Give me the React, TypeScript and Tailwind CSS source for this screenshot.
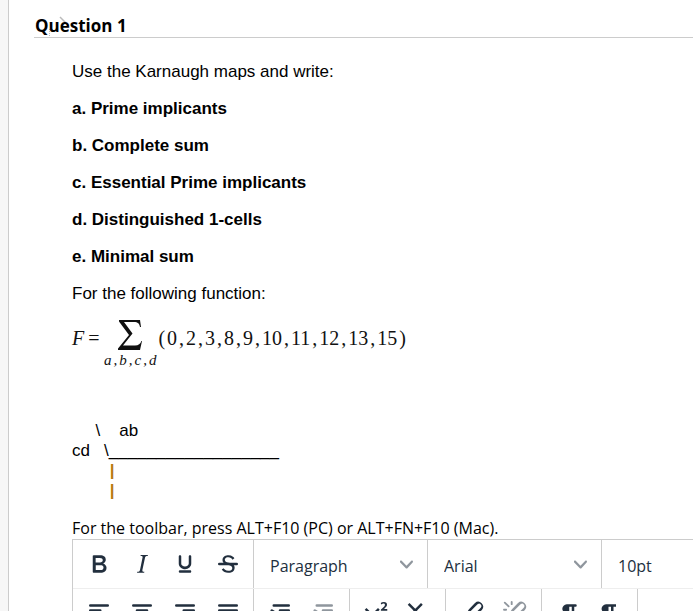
import React from "react";
import clsx from "clsx";

type IconProps = {
  paths: string[];
};

type ToolProps = IconProps & {
  label: string;
  disabled?: boolean;
};

type PickerProps = {
  label: string;
  options: string[];
};

const BAR = "M5 5h14a1 1 0 0 1 0 2H5a1 1 0 1 1 0-2z";
const LINK =
  "M6.2 12.3a1 1 0 0 1 1.4 1.4l-2 2a2 2 0 1 0 2.6 2.8l4.8-4.8a1 1 0 0 0 0-1.4 1 1 0 1 1 1.4-1.3 2.9 2.9 0 0 1 0 4L9.6 20a3.9 3.9 0 0 1-5.5-5.5l2-2zm11.6-.6a1 1 0 0 1-1.4-1.4l2-2a2 2 0 1 0-2.6-2.8L11 10.3a1 1 0 0 0 0 1.4A1 1 0 1 1 9.6 13a2.9 2.9 0 0 1 0-4L14.4 4a3.9 3.9 0 0 1 5.5 5.5l-2 2z";

const textTools: ToolProps[] = [
  {
    label: "Bold",
    paths: [
      "M7.8 19c-.3 0-.5 0-.6-.2l-.2-.5V5.7c0-.2 0-.4.2-.5l.6-.2h5c1.5 0 2.7.3 3.5 1 .7.6 1.1 1.4 1.1 2.5a3 3 0 0 1-.6 1.9c-.4.6-1 1-1.6 1.2.4.1.9.3 1.3.6s.8.7 1 1.2c.4.4.5 1 .5 1.6 0 1.3-.4 2.3-1.3 3-.8.7-2.1 1-3.8 1H7.8zm5-8.3c.6 0 1.2-.1 1.6-.5.4-.3.6-.7.6-1.3 0-1.1-.8-1.7-2.3-1.7H9.3v3.5h3.4zm.5 6c.7 0 1.3-.1 1.7-.4.4-.4.6-.9.6-1.5s-.2-1-.7-1.4c-.4-.3-1-.4-2-.4H9.4v3.8h4z",
    ],
  },
  {
    label: "Italic",
    paths: [
      "M16.7 4.7l-.1.9h-.3c-.6 0-1 0-1.4.3-.3.3-.4.6-.5 1.1l-2.1 9.8v.6c0 .5.4.8 1.4.8h.2l-.2.8H8l.2-.8h.2c1.1 0 1.8-.5 2-1.5l2-9.8.1-.5c0-.6-.4-.8-1.4-.8h-.3l.2-.9h5.8z",
    ],
  },
  {
    label: "Underline",
    paths: [
      "M16 5c.6 0 1 .4 1 1v5.5a4 4 0 0 1-.4 1.8l-1 1.4a5.3 5.3 0 0 1-5.5 1 5 5 0 0 1-1.6-1c-.5-.4-.8-.9-1.1-1.4a4 4 0 0 1-.4-1.8V6c0-.6.4-1 1-1s1 .4 1 1v5.5c0 .3 0 .6.2 1l.6.7a3.3 3.3 0 0 0 2.2.8 3.4 3.4 0 0 0 2.2-.8c.3-.2.4-.5.6-.8l.2-.9V6c0-.6.4-1 1-1zM8 17h8c.6 0 1 .4 1 1s-.4 1-1 1H8a1 1 0 0 1 0-2z",
    ],
  },
  {
    label: "Strikethrough",
    paths: [
      "M15.6 8.5c-.5-.7-1-1.1-1.3-1.3-.6-.4-1.3-.6-2-.6-2.7 0-2.8 1.7-2.8 2.1 0 1.6 1.8 2 3.2 2.3 4.4.9 4.6 2.8 4.6 3.9 0 1.4-.7 4.1-5 4.1A6.2 6.2 0 0 1 7 16.4l1.5-1.1c.4.6 1.6 2 3.7 2 1.6 0 2.5-.4 3-1.2.4-.8.3-2-.8-2.6-.7-.4-1.6-.7-2.9-1-1-.2-3.9-.8-3.9-3.6C7.6 6 10.3 5 12.4 5c2.9 0 4.2 1.6 4.7 2.4l-1.5 1.1z",
      "M5 11h14a1 1 0 0 1 0 2H5a1 1 0 0 1 0-2z",
    ],
  },
];

const alignTools: ToolProps[] = [
  {
    label: "Align left",
    paths: [BAR, "M5 9h8a1 1 0 0 1 0 2H5a1 1 0 1 1 0-2zm0 8h8a1 1 0 0 1 0 2H5a1 1 0 0 1 0-2zm0-4h14a1 1 0 0 1 0 2H5a1 1 0 0 1 0-2z"],
  },
  {
    label: "Align center",
    paths: [BAR, "M8 9h8a1 1 0 0 1 0 2H8a1 1 0 1 1 0-2zm0 8h8a1 1 0 0 1 0 2H8a1 1 0 0 1 0-2zm-3-4h14a1 1 0 0 1 0 2H5a1 1 0 0 1 0-2z"],
  },
  {
    label: "Align right",
    paths: [BAR, "M11 9h8a1 1 0 0 1 0 2h-8a1 1 0 0 1 0-2zm0 8h8a1 1 0 0 1 0 2h-8a1 1 0 0 1 0-2zm-6-4h14a1 1 0 0 1 0 2H5a1 1 0 0 1 0-2z"],
  },
  {
    label: "Justify",
    paths: [BAR, "M5 9h14a1 1 0 0 1 0 2H5a1 1 0 1 1 0-2zm0 4h14a1 1 0 0 1 0 2H5a1 1 0 0 1 0-2zm0 4h14a1 1 0 0 1 0 2H5a1 1 0 0 1 0-2z"],
  },
];

const INDENT_BARS =
  "M7 5h12a1 1 0 0 1 0 2H7a1 1 0 1 1 0-2zm5 4h7a1 1 0 0 1 0 2h-7a1 1 0 0 1 0-2zm0 4h7a1 1 0 0 1 0 2h-7a1 1 0 0 1 0-2zm-5 4h12a1 1 0 0 1 0 2H7a1 1 0 0 1 0-2z";
const INDENT_ARROW = "M4.800 10.800a1 1 0 0 1 1.200-1.600l3.200 2a1 1 0 0 1 0 1.600l-3.200 2a1 1 0 0 1-1.200-1.600L6.600 12z";

const moreTools: ToolProps[][] = [
  [
    { label: "Increase indent", paths: [INDENT_BARS, INDENT_ARROW] },
    { label: "Decrease indent", disabled: true, paths: [INDENT_BARS, INDENT_ARROW] },
  ],
  [
    {
      label: "Superscript",
      paths: [
        "M15 9.4L10.4 14l4.6 4.6-1.4 1.4L9 15.4 4.4 20 3 18.6 7.6 14 3 9.4 4.4 8 9 12.6 13.6 8 15 9.4zm5.9.8h-5v-1l1-.8 1.7-1.6c.3-.5.5-.9.5-1.3 0-.4 0-.7-.2-.8-.2-.2-.5-.3-.9-.3l-.8.2-1 .5-.4-1.1 1-.6 1.6-.3c.8 0 1.4.2 1.8.6.4.4.6.9.6 1.6 0 .5-.2 1-.5 1.5l-1.3 1.4-.6.5h2.6v1.5z",
      ],
    },
    {
      label: "Subscript",
      paths: [
        "M10.4 10l4.6 4.6-1.4 1.4L9 11.4 4.4 16 3 14.6 7.6 10 3 5.4 4.4 4 9 8.6 13.6 4 15 5.4 10.4 10zM21 19h-5v-1l1-.8 1.7-1.6c.3-.4.5-.8.5-1.2 0-.3 0-.6-.2-.7-.2-.2-.5-.3-.9-.3l-.8.2-1 .6-.4-1.2 1-.5 1.6-.3c.8 0 1.4.2 1.8.6.4.4.6.9.6 1.5s-.2 1.1-.5 1.6l-1.3 1.4-.6.5H21V19z",
      ],
    },
  ],
  [
    { label: "Insert link", paths: [LINK] },
    {
      label: "Remove link",
      disabled: true,
      paths: [
        LINK,
        "M7.6 6.3a.8.8 0 0 1-1 1.1L3.3 4.2a.7.7 0 1 1 1-1l3.2 3.1zM5.1 8.6a.8.8 0 0 1 0 1.5H3a.8.8 0 0 1 0-1.5h2zm5-3.5a.8.8 0 0 1-1.5 0V3a.8.8 0 0 1 1.5 0v2zm6 11.8a.8.8 0 0 1 1-1l3.2 3.2a.8.8 0 0 1-1 1L16 17zm-2.2 2a.8.8 0 0 1 1.5 0V21a.8.8 0 0 1-1.5 0v-2zm5-3.5a.8.8 0 1 1 0-1.5H21a.8.8 0 0 1 0 1.5h-2z",
      ],
    },
  ],
  [
    {
      label: "Left to right",
      paths: [
        "M11 5h7a1 1 0 0 1 0 2h-1v11a1 1 0 0 1-2 0V7h-2v11a1 1 0 0 1-2 0v-6c-.5 0-1 0-1.4-.3A3.4 3.4 0 0 1 7.8 10a3.3 3.3 0 0 1 0-2.8 3.4 3.4 0 0 1 1.8-1.8L11 5zM4.4 16.2L6.2 15l-1.8-1.2a1 1 0 0 1 1.2-1.6l3 2a1 1 0 0 1 0 1.6l-3 2a1 1 0 1 1-1.2-1.6z",
      ],
    },
    {
      label: "Right to left",
      paths: [
        "M8 5h8v2h-2v12h-2V7h-2v12H8v-7c-.5 0-1 0-1.4-.3A3.4 3.4 0 0 1 4.8 10a3.3 3.3 0 0 1 0-2.8 3.4 3.4 0 0 1 1.8-1.8L8 5zm12 11.2a1 1 0 1 1-1 1.6l-3-2a1 1 0 0 1 0-1.6l3-2a1 1 0 1 1 1 1.6L18.4 15l1.8 1.2z",
      ],
    },
  ],
];

const tasks = [
  "a. Prime implicants",
  "b. Complete sum",
  "c. Essential Prime implicants",
  "d. Distinguished 1-cells",
  "e. Minimal sum",
];

const minterms = [0, 2, 3, 8, 9, 10, 11, 12, 13, 15];

const Icon = ({ paths }: IconProps) => (
  <svg className="h-[30px] w-[30px]" viewBox="0 0 24 24" fill="currentColor" fillRule="evenodd">
    {paths.map((d) => (
      <path key={d} d={d} />
    ))}
  </svg>
);

const Tool = ({ label, paths, disabled }: ToolProps) => (
  <button
    type="button"
    aria-label={label}
    disabled={disabled}
    className={clsx(
      "flex h-12 w-[43px] shrink-0 items-center justify-center text-[#222f3e]",
      disabled && "opacity-50"
    )}
  >
    <Icon paths={paths} />
  </button>
);

const Picker = ({ label, options }: PickerProps) => (
  <div className="relative w-[174px] shrink-0 border-r border-[#ccc]">
    <select
      aria-label={label}
      className="h-12 w-full appearance-none bg-transparent pl-4 pt-1 text-base text-[#222f3e]"
    >
      {options.map((option) => (
        <option key={option}>{option}</option>
      ))}
    </select>
    <svg
      className="pointer-events-none absolute right-3.5 top-[18px] h-[13px] w-[13px] text-[#222f3e] opacity-50"
      viewBox="0 0 10 10"
      fill="currentColor"
    >
      <path d="M8.7 2.2c.3-.3.8-.3 1 0 .4.4.4.9 0 1.2L5.7 7.8c-.3.3-.9.3-1.2 0L.2 3.4a.8.8 0 0 1 0-1.2c.3-.3.8-.3 1.1 0L5 6l3.7-3.8z" />
    </svg>
  </div>
);

const Formula = () => (
  <div className="flex items-start pt-4 font-['Liberation_Serif',serif] text-xl leading-6 text-[#111]">
    <div className="flex w-8 gap-1 pt-1.5">
      <i>F</i>
      <span>=</span>
    </div>
    <div className="flex flex-col items-center">
      <svg className="h-[30px] w-6" viewBox="0 0 24 30" fill="#111">
        <path d="M1 0h21l1 7h-1c-.6-3.600-2.200-5-6-5H6l8.500 11.500L5 25.500h12c3.600 0 5.400-1.600 6.400-4.500h.6l-2 9H0v-1.500L11 15 1 1.500z" />
      </svg>
      <div className="flex gap-0.5 text-[15px] italic leading-5">
        {["a", ",", "b", ",", "c", ",", "d"].map((part, i) => (
          <span key={i}>{part}</span>
        ))}
      </div>
    </div>
    <div className="flex gap-0.5 pl-0.5 pt-1.5">
      <span>(</span>
      {minterms.map((term, i) => (
        <React.Fragment key={term}>
          {i > 0 && <span>,</span>}
          <span>{term}</span>
        </React.Fragment>
      ))}
      <span>)</span>
    </div>
  </div>
);

const Toolbar = () => (
  <div className="overflow-hidden border-l border-t border-[#ccc]">
    <div className="flex border-b border-[#eee]">
      <div className="flex shrink-0 border-r border-[#ccc] px-1">
        {textTools.map((tool) => (
          <Tool key={tool.label} {...tool} />
        ))}
      </div>
      <Picker label="Blocks" options={["Paragraph", "Heading 1", "Heading 2"]} />
      <Picker label="Fonts" options={["Arial", "Georgia", "Verdana"]} />
      <Picker label="Font sizes" options={["10pt", "12pt", "14pt"]} />
    </div>
    <div className="flex">
      <div className="flex shrink-0 border-r border-[#ccc] px-1">
        {alignTools.map((tool) => (
          <Tool key={tool.label} {...tool} />
        ))}
      </div>
      {moreTools.map((group) => (
        <div key={group[0].label} className="flex w-24 shrink-0 justify-center border-r border-[#ccc]">
          {group.map((tool) => (
            <Tool key={tool.label} {...tool} />
          ))}
        </div>
      ))}
    </div>
  </div>
);

const App = () => {
  return (
    <div className="flex h-screen overflow-hidden bg-[#f7f7f7] pl-2 font-['Open_Sans',sans-serif] text-black">
      <main className="min-w-0 flex-1 border-l border-[#ccc] bg-white pl-[25px]">
        <header className="relative border-b border-[#ccc] pt-3.5">
          <svg className="absolute left-3.5 top-4 h-5 w-5" viewBox="0 0 20 20" fill="none" stroke="#bbb">
            <path d="M12 1l6 6" strokeWidth="1.5" />
            <path d="M1.500 13v7" strokeDasharray="1 1" />
          </svg>
          <h1 className="relative pl-px text-[17px] font-bold leading-[23px]">Question 1</h1>
        </header>
        <section className="pl-[38px]">
          <div className="font-['Liberation_Sans',Arial,sans-serif] text-[17px] leading-5">
            <div className="flex flex-col gap-[17px] pt-6">
              <p>Use the Karnaugh maps and write:</p>
              {tasks.map((task) => (
                <p key={task} className="font-bold">
                  {task}
                </p>
              ))}
              <p>For the following function:</p>
            </div>
            <Formula />
            <div className="whitespace-pre pt-[51px]">
              <p>{"     \\    ab"}</p>
              <p>{"cd   \\__________________"}</p>
              <p className="font-bold text-[#b87a10]">{"        |"}</p>
              <p className="font-bold text-[#b87a10]">{"        |"}</p>
            </div>
          </div>
          <p className="pt-4 text-base leading-[22px]">
            For the toolbar, press ALT+F10 (PC) or ALT+FN+F10 (Mac).
          </p>
          <Toolbar />
        </section>
      </main>
    </div>
  );
};

export default App;
